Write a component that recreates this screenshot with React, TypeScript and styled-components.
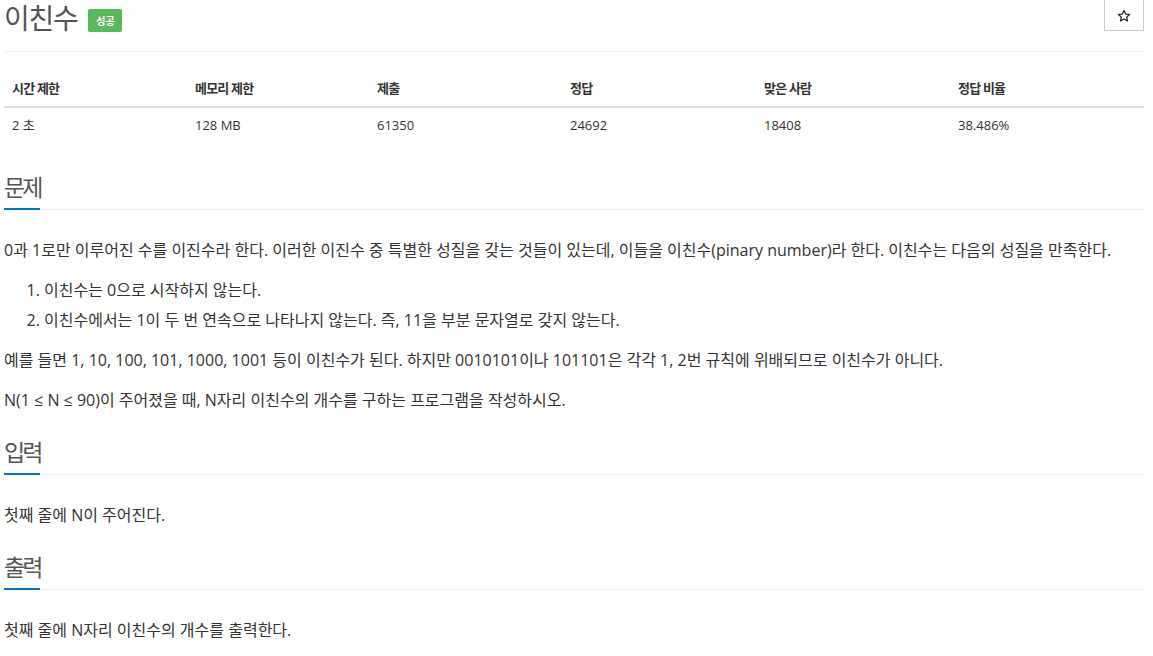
import React from "react";
import styled, { createGlobalStyle } from "styled-components";

const Global = createGlobalStyle`
  html, body { margin: 0; padding: 0; background: #fff; }
  body {
    font-family: "Open Sans", "Noto Sans CJK KR", sans-serif;
    color: #333;
    font-size: 13px;
  }
`;

const Page = styled.div`
  padding: 0 9px 0 4px;
`;

const Header = styled.div`
  display: flex;
  align-items: flex-start;
  justify-content: space-between;
  height: 51px;
  border-bottom: 1px solid #eee;
  margin-top: -8px;
  padding-top: 8px;
  box-sizing: content-box;
`;

const TitleRow = styled.div`
  display: flex;
  align-items: center;
  gap: 11px;
`;

const Title = styled.h1`
  margin: 0;
  font-size: 28px;
  font-weight: 400;
  color: #555;
  line-height: 36px;
  letter-spacing: -1.3px;
`;

const Badge = styled.span`
  display: inline-flex;
  align-items: center;
  justify-content: center;
  width: 34px;
  height: 23px;
  margin-top: 4px;
  background: #5cb85c;
  color: #fff;
  font-size: 10px;
  font-weight: 700;
  border-radius: 2px;
`;

const StarButton = styled.button`
  width: 40px;
  height: 39px;
  margin-top: -8px;
  border: 1px solid #ccc;
  background: #fff;
  display: flex;
  align-items: center;
  justify-content: center;
  padding: 8px 0 0;
  box-sizing: border-box;
`;

const Table = styled.table`
  width: 100%;
  table-layout: fixed;
  border-collapse: collapse;
  margin: 19px 0 30px;
  font-size: 13px;
`;

const Th = styled.th<{ $w?: number }>`
  text-align: left;
  font-weight: 700;
  padding: 8px 8px;
  line-height: 19px;
  border-bottom: 2px solid #ddd;
  width: ${(p) => (p.$w ? `${p.$w}px` : "auto")};
  letter-spacing: -0.8px;
`;

const Td = styled.td`
  padding: 8px 8px;
  line-height: 19px;
`;

const Section = styled.section`
  margin-top: 28px;
`;

const SectionHead = styled.div`
  display: flex;
  border-bottom: 1px dotted #ddd;
  height: 36px;
`;

const HeadText = styled.h2`
  margin: 0 0 -1px;
  font-size: 23px;
  font-weight: 400;
  color: #555;
  line-height: 30px;
  letter-spacing: -3px;
  padding-bottom: 6px;
  border-bottom: 2px solid #0076c0;
  align-self: flex-end;
`;

const Body = styled.div`
  font-size: 16px;
  line-height: 20px;
  padding-top: 30px;
`;

const P = styled.p`
  margin: 0 0 20px;
`;

const Ol = styled.ol`
  margin: 0 0 20px;
  padding-left: 40px;
  li { margin-bottom: 10px; }
  li:last-child { margin-bottom: 0; }
`;

const Star = () => (
  <svg width="14" height="14" viewBox="0 0 24 24" fill="none" stroke="#222" strokeWidth="2.2" strokeLinejoin="round">
    <polygon points="12,2.5 14.9,8.6 21.5,9.4 16.6,13.9 17.9,20.5 12,17.2 6.1,20.5 7.4,13.9 2.5,9.4 9.1,8.6" />
  </svg>
);

const heads = [
  { label: "시간 제한", w: 167 },
  { label: "메모리 제한", w: 166 },
  { label: "제출", w: 177 },
  { label: "정답", w: 178 },
  { label: "맞은 사람", w: 178 },
  { label: "정답 비율" },
];
const vals = ["2 초", "128 MB", "61350", "24692", "18408", "38.486%"];

export default function App() {
  return (
    <Page>
      <Global />
      <Header>
        <TitleRow>
          <Title>이친수</Title>
          <Badge>성공</Badge>
        </TitleRow>
        <StarButton aria-label="star">
          <Star />
        </StarButton>
      </Header>
      <Table>
        <thead>
          <tr>
            {heads.map((h) => (
              <Th key={h.label} $w={h.w}>{h.label}</Th>
            ))}
          </tr>
        </thead>
        <tbody>
          <tr>
            {vals.map((v) => (
              <Td key={v}>{v}</Td>
            ))}
          </tr>
        </tbody>
      </Table>

      <Section>
        <SectionHead><HeadText>문제</HeadText></SectionHead>
        <Body>
          <P>0과 1로만 이루어진 수를 이진수라 한다. 이러한 이진수 중 특별한 성질을 갖는 것들이 있는데, 이들을 이친수(pinary number)라 한다. 이친수는 다음의 성질을 만족한다.</P>
          <Ol>
            <li>이친수는 0으로 시작하지 않는다.</li>
            <li>이친수에서는 1이 두 번 연속으로 나타나지 않는다. 즉, 11을 부분 문자열로 갖지 않는다.</li>
          </Ol>
          <P>예를 들면 1, 10, 100, 101, 1000, 1001 등이 이친수가 된다. 하지만 0010101이나 101101은 각각 1, 2번 규칙에 위배되므로 이친수가 아니다.</P>
          <P>N(1 ≤ N ≤ 90)이 주어졌을 때, N자리 이친수의 개수를 구하는 프로그램을 작성하시오.</P>
        </Body>
      </Section>

      <Section>
        <SectionHead><HeadText>입력</HeadText></SectionHead>
        <Body>
          <P>첫째 줄에 N이 주어진다.</P>
        </Body>
      </Section>

      <Section>
        <SectionHead><HeadText>출력</HeadText></SectionHead>
        <Body>
          <P>첫째 줄에 N자리 이친수의 개수를 출력한다.</P>
        </Body>
      </Section>
    </Page>
  );
}
